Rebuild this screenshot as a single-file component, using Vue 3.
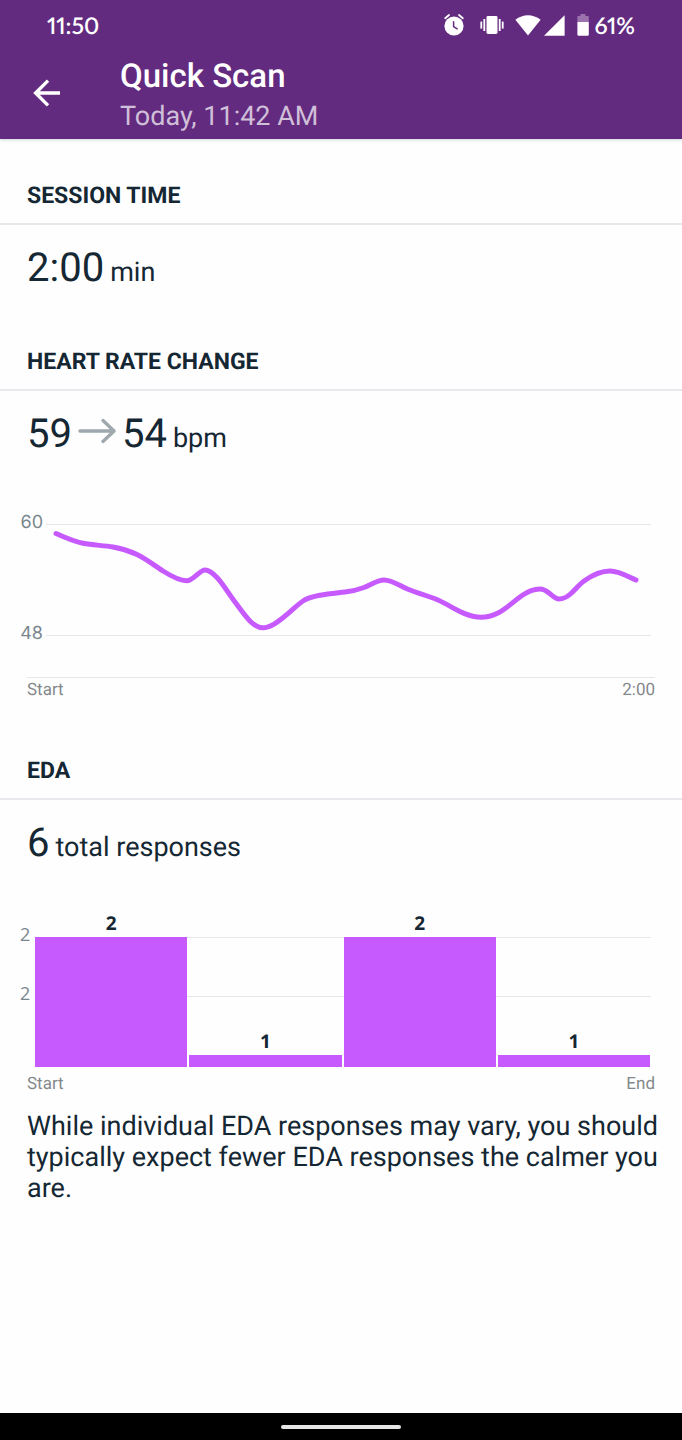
<script setup>
// Each knot is [x, y, slope].
const heartRate = [
  [56, 533.5, 0.45], [83, 543.3, 0.2], [113, 547, 0.17], [137, 554.5, 0.47],
  [163, 571, 0.64], [187, 580.7, 0], [196, 575.6, -0.8], [205, 570, 0], [217, 577.5, 1.05],
  [235, 602, 1.3], [251, 622, 0.95], [263, 627.8, 0], [286, 615.3, -0.78], [303, 601, -0.65],
  [320, 595.3, -0.2], [345, 592, -0.12], [364, 587.5, -0.38], [384, 580, 0],
  [408, 589.3, 0.42], [438, 600, 0.44], [464, 613.4, 0.43], [481, 617.3, 0],
  [498, 613, -0.5], [522, 595.5, -0.7], [540, 589, 0], [549, 593, 0.8], [559, 599, 0],
  [571, 593.5, -0.9], [584, 581, -0.72], [610, 571, 0], [636, 580, 0.45]
]

const responses = [
  { count: 2, height: 100 },
  { count: 1, height: 9 },
  { count: 2, height: 100 },
  { count: 1, height: 9 }
]

function smoothPath(knots) {
  let d = `M${knots[0][0]} ${knots[0][1]}`
  for (let i = 1; i < knots.length; i++) {
    const [x0, y0, m0] = knots[i - 1]
    const [x1, y1, m1] = knots[i]
    const h = (x1 - x0) / 3
    d += `C${x0 + h} ${y0 + h * m0} ${x1 - h} ${y1 - h * m1} ${x1} ${y1}`
  }
  return d
}

const heartPath = smoothPath(heartRate)
</script>

<template>
  <div class="screen">
    <header class="top">
      <div class="status">
        <span class="clock">11:50</span>
        <span class="status-icons">
          <svg class="alarm" width="20" height="22" viewBox="0 0 20 22" aria-hidden="true">
            <circle cx="10" cy="12" r="9.6" fill="#fff" />
            <path d="M1.2 4.2L5 1M18.8 4.2L15 1" stroke="#fff" stroke-width="1.8" stroke-linecap="round" />
            <path d="M9.6 7.2v5.4l4 2.6" fill="none" stroke="#632b7f" stroke-width="1.5" />
          </svg>
          <svg class="vibrate" width="24" height="18" viewBox="0 0 24 18" fill="#fff" aria-hidden="true">
            <rect x="6.5" y="0" width="11" height="18" rx="1.4" />
            <rect x="3.4" y="3" width="1.8" height="12" />
            <rect x="0.4" y="5.6" width="1.8" height="7" />
            <rect x="18.8" y="3" width="1.8" height="12" />
            <rect x="21.8" y="5.6" width="1.8" height="7" />
          </svg>
          <svg class="wifi" width="26" height="21" viewBox="0 0 26 21" aria-hidden="true">
            <path d="M0.4 4.8C8-1.2 18-1.2 25.6 4.8L13 20.6z" fill="#fff" />
          </svg>
          <svg class="signal" width="21" height="21" viewBox="0 0 21 21" aria-hidden="true">
            <path d="M20.6 0.2V20.8H0z" fill="#fff" />
          </svg>
          <svg class="battery" width="12" height="22" viewBox="0 0 12 22" aria-hidden="true">
            <path d="M3.4 0h5v2H11a.8.8 0 0 1 .8.8V8H.4V2.8a.8.8 0 0 1 .8-.8h2.2z" fill="#9b72ae" />
            <path d="M.4 8h11.4v12.6a1.2 1.2 0 0 1-1.2 1.2h-9a1.2 1.2 0 0 1-1.2-1.2z" fill="#fff" />
          </svg>
          <span class="percent">61%</span>
        </span>
      </div>
      <div class="bar">
        <button class="back" type="button" aria-label="Back">
          <svg width="28" height="28" viewBox="0 0 28 28" fill="none" stroke="#fff" stroke-width="3.4" aria-hidden="true">
            <path d="M27 14H3M15 1.6L2.6 14L15 26.4" />
          </svg>
        </button>
        <div class="heading">
          <h1>Quick Scan</h1>
          <p>Today, 11:42 AM</p>
        </div>
      </div>
    </header>

    <main>
      <section>
        <h2>SESSION TIME</h2>
        <p class="metric"><span class="big">2:00</span><span class="unit">min</span></p>
      </section>

      <section>
        <h2>HEART RATE CHANGE</h2>
        <p class="metric">
          <span class="big">59</span>
          <svg class="arrow" width="38" height="26" viewBox="0 0 38 26" fill="none" stroke="#9fa8ad" stroke-width="3.4" stroke-linecap="round" stroke-linejoin="round" role="img" aria-label="to">
            <path d="M2 13H35M25 2.6L36 13L25 23.4" />
          </svg>
          <span class="big">54</span><span class="unit">bpm</span>
        </p>
        <div class="line-chart">
          <div class="grid-row"><span>60</span><i></i></div>
          <div class="grid-row"><span>48</span><i></i></div>
          <svg class="curve" viewBox="56 524 580 112" preserveAspectRatio="none" role="img" aria-label="Heart rate">
            <path :d="heartPath" fill="none" stroke="#c65afe" stroke-width="5" stroke-linecap="round" stroke-linejoin="round" vector-effect="non-scaling-stroke" />
          </svg>
        </div>
        <div class="range ruled"><span>Start</span><span>2:00</span></div>
      </section>

      <section>
        <h2>EDA</h2>
        <p class="metric"><span class="big">6</span><span class="unit">total responses</span></p>
        <div class="bar-chart">
          <div class="scale"><span>2</span><span>2</span></div>
          <div class="plot">
            <div v-for="(r, i) in responses" :key="i" class="column">
              <span class="count">{{ r.count }}</span>
              <div class="block" :style="{ height: r.height + '%' }"></div>
            </div>
          </div>
        </div>
        <div class="range"><span>Start</span><span>End</span></div>
        <p class="note">While individual EDA responses may vary, you should typically expect fewer EDA responses the calmer you are.</p>
      </section>
    </main>

    <footer class="nav"><span></span></footer>
  </div>
</template>

<style>
body {
  margin: 0;
  background: #fefefe;
}
</style>

<style scoped>
.screen {
  min-height: 100vh;
  display: flex;
  flex-direction: column;
  background: #fefefe;
  color: #142733;
  font-family: Roboto, sans-serif;
  text-rendering: geometricPrecision;
}
h1, h2, p {
  margin: 0;
}
svg {
  display: block;
  flex: none;
}
.top {
  height: 139px;
  box-sizing: border-box;
  background: #632b7f;
  color: #fff;
  box-shadow: 0 1px 3px rgba(20, 50, 60, 0.2);
}
.status {
  height: 50px;
  padding: 0 47px;
  display: flex;
  align-items: center;
  justify-content: space-between;
  font-family: Lato, sans-serif;
  font-size: 23px;
  font-weight: 600;
  font-variant-numeric: proportional-nums;
}
.status-icons {
  display: flex;
  align-items: center;
}
.alarm { margin-right: 16px; }
.vibrate { margin-right: 11px; }
.wifi { margin-right: 3px; }
.signal { margin-right: 12px; }
.battery { margin-right: 6px; }
.bar {
  display: flex;
  align-items: center;
  padding: 8px 33px 0;
}
.back {
  width: 28px;
  height: 28px;
  margin: 0 59px 10px 0;
  padding: 0;
  border: 0;
  background: none;
}
h1 {
  font-size: 33px;
  line-height: 38px;
  font-weight: 500;
}
.heading p {
  font-size: 27px;
  line-height: 41px;
  color: #d0bfd8;
}
main {
  padding-top: 27px;
}
h2 {
  padding: 0 27px;
  height: 57px;
  line-height: 60px;
  border-bottom: 2px solid #e8e9ec;
  font-size: 23px;
  font-weight: 700;
}
.metric {
  display: flex;
  align-items: baseline;
  height: 84px;
  padding: 0 27px;
  line-height: 86px;
}
.big {
  font-size: 40px;
}
.unit {
  margin-left: 6px;
  font-size: 27px;
}
section + section {
  margin-top: 23px;
}
.arrow {
  align-self: center;
  margin: 0 6px 4px;
}
.line-chart {
  position: relative;
  height: 112px;
  margin: 49px 31px 41px 19px;
  display: flex;
  flex-direction: column;
  justify-content: space-between;
}
.grid-row {
  height: 1px;
  display: flex;
  align-items: center;
  justify-content: space-between;
  color: #7a868e;
  font-family: Inter, sans-serif;
  font-size: 18px;
}
.grid-row span {
  width: 24px;
  text-align: right;
  line-height: 18px;
  padding-bottom: 4px;
}
.grid-row i {
  width: calc(100% - 27px);
  height: 1px;
  background: #e6e7e9;
}
.curve {
  position: absolute;
  top: 0;
  left: 37px;
  width: calc(100% - 52px);
  height: 100%;
  overflow: visible;
}
.range {
  display: flex;
  justify-content: space-between;
  margin: 0 27px;
  color: #85898c;
  font-size: 17px;
  line-height: 25px;
}
.ruled {
  border-top: 1px solid #e6e7e9;
  margin-bottom: 38px;
}
.bar-chart {
  display: flex;
  height: 130px;
  margin: 53px 31px 5px 20px;
}
.scale {
  width: 15px;
  margin-top: -2px;
  color: #7a868e;
  font-family: "Open Sans", sans-serif;
  font-size: 18px;
}
.scale span {
  display: block;
  height: 59px;
  line-height: 0;
}
.plot {
  flex: 1;
  display: flex;
  gap: 2px;
  padding-right: 1px;
  background: linear-gradient(#e6e7e9, #e6e7e9) 0 0 / 100% 1px no-repeat,
    linear-gradient(#e6e7e9, #e6e7e9) 0 59px / 100% 1px no-repeat;
}
.column {
  flex: 1;
  display: flex;
  flex-direction: column;
  justify-content: flex-end;
}
.count {
  text-align: center;
  font-family: "Open Sans", sans-serif;
  font-size: 19px;
  line-height: 28px;
  font-weight: 700;
}
.block {
  flex: none;
  background: #c65afe;
}
.note {
  margin: 14px 20px 20px 27px;
  font-size: 27px;
  line-height: 31px;
}
.nav {
  margin-top: auto;
  height: 27px;
  display: flex;
  align-items: center;
  justify-content: center;
  background: #000;
}
.nav span {
  width: 120px;
  height: 4px;
  border-radius: 2px;
  background: #e6e6e6;
}
</style>
